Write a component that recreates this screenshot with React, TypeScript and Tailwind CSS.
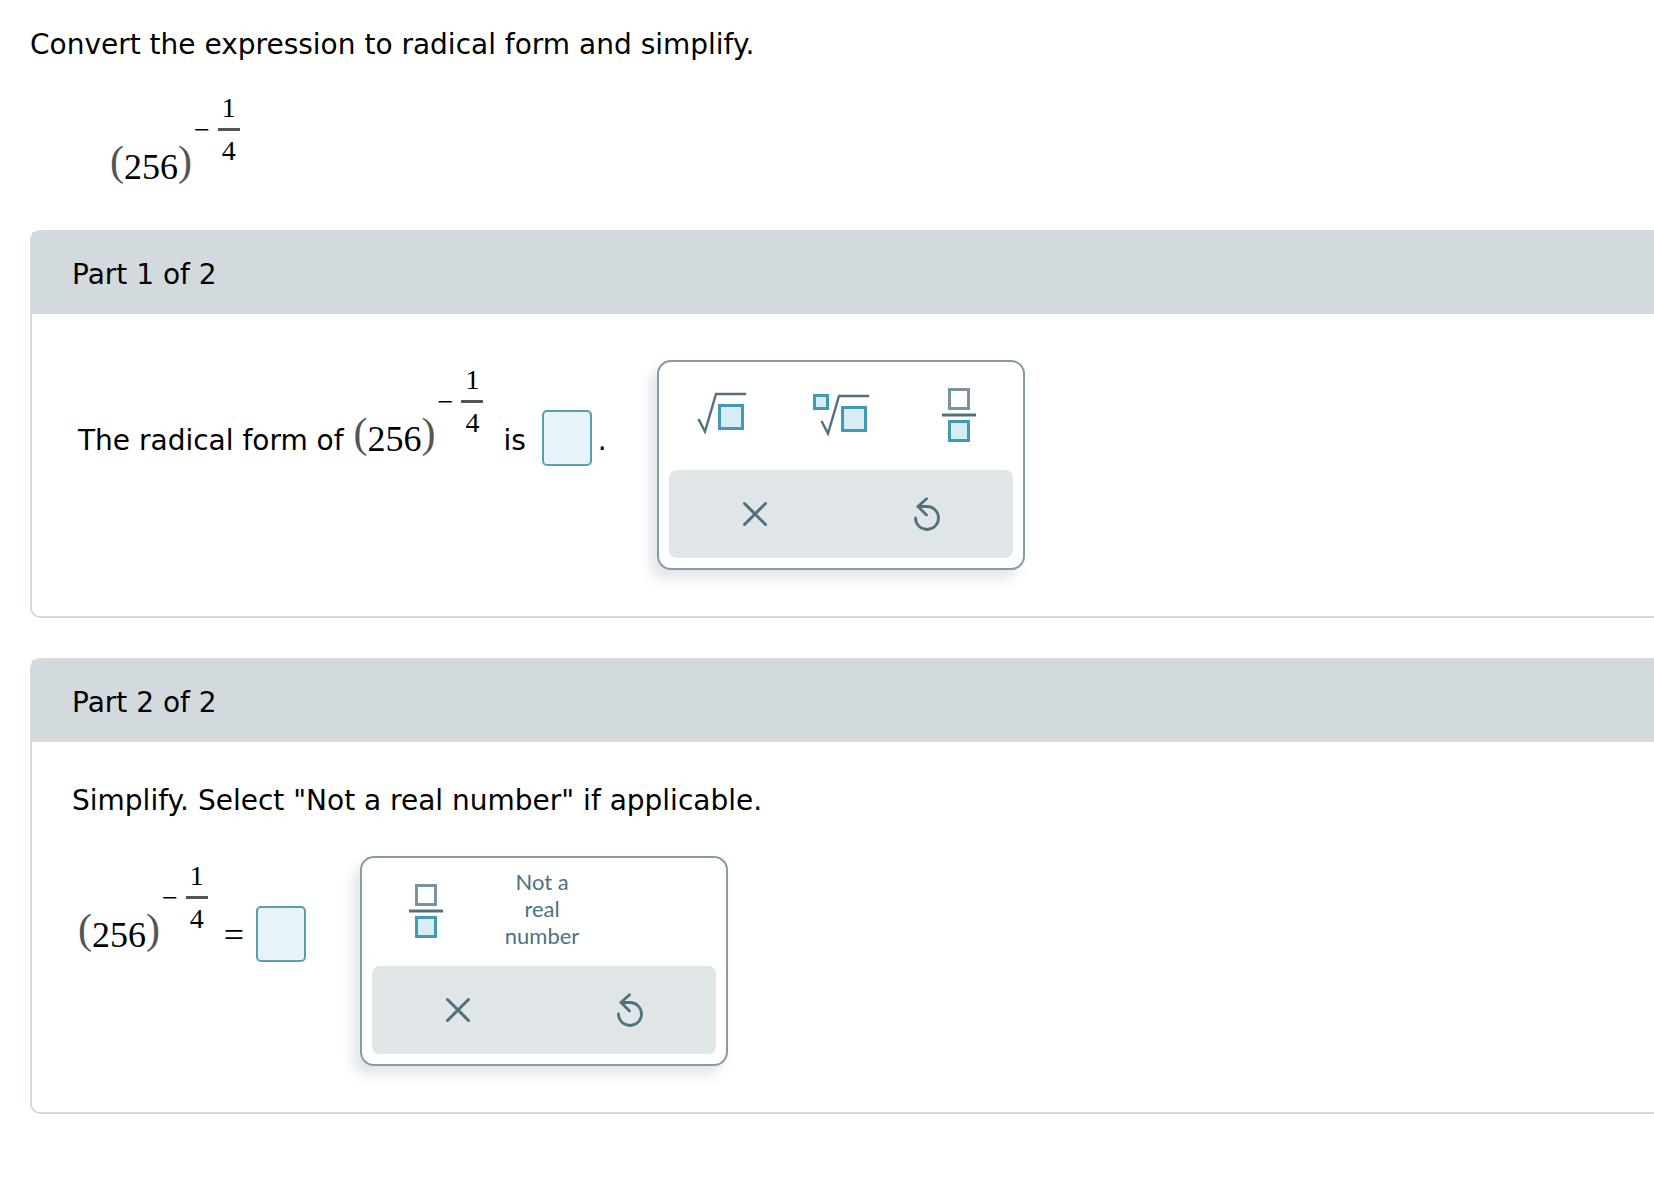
import type { ReactNode } from "react";

function Power() {
  return (
    <div
      role="math"
      aria-label="256 to the power of negative one fourth"
      className="flex items-start gap-0.5 font-['Liberation_Serif',serif] text-black"
    >
      <div className="mt-[55px] flex items-center text-[36px] leading-9">
        <span className="pb-3 text-[42px] leading-6 text-[#555]">(</span>
        <span>256</span>
        <span className="pb-3 text-[42px] leading-6 text-[#555]">)</span>
      </div>
      <div className="flex items-center gap-2 text-[28px] leading-7">
        <span>−</span>
        <div className="flex flex-col items-center gap-1.5">
          <span>1</span>
          <span className="h-[3px] w-[22px] bg-[#555]" />
          <span>4</span>
        </div>
      </div>
    </div>
  );
}

function AnswerBox({ label }: { label: string }) {
  return (
    <input
      type="text"
      aria-label={label}
      className="mt-11 h-14 w-[50px] rounded-[5px] border-2 border-[#5b9fad] bg-[#e6f3f8] text-center font-['Liberation_Serif',serif] text-[36px] outline-none"
    />
  );
}

function SqrtIcon() {
  return (
    <svg width="64" height="54" viewBox="0 0 64 54" fill="none">
      <path d="M5 32 11 43.500 22 6H51" stroke="#4f717f" strokeWidth="2.400" strokeLinecap="square" />
      <rect x="25.500" y="17.500" width="23" height="23" fill="#d5edf3" stroke="#4299b3" strokeWidth="3" />
    </svg>
  );
}

function RootIcon() {
  return (
    <svg width="64" height="54" viewBox="0 0 64 54" fill="none">
      <rect x="5.500" y="7.500" width="13" height="13" fill="#d5edf3" stroke="#4299b3" strokeWidth="3" />
      <path d="M13 34 19 45.500 30 8H59" stroke="#4f717f" strokeWidth="2.400" strokeLinecap="square" />
      <rect x="33.500" y="19.500" width="23" height="23" fill="#d5edf3" stroke="#4299b3" strokeWidth="3" />
    </svg>
  );
}

function FractionIcon() {
  return (
    <svg width="34" height="54" viewBox="0 0 34 54" fill="none">
      <rect x="7.500" y="1.500" width="19" height="19" stroke="#7a949f" strokeWidth="3" />
      <path d="M0 27H34" stroke="#4f717f" strokeWidth="3" />
      <rect x="7.500" y="33.500" width="19" height="19" fill="#d5edf3" stroke="#4299b3" strokeWidth="3" />
    </svg>
  );
}

function Palette({ children }: { children: ReactNode }) {
  return (
    <div className="w-[368px] shrink-0 rounded-[14px] border-2 border-[#849ca6] bg-white p-2.5 shadow-[-7px_9px_12px_rgba(79,113,127,0.17)]">
      <div className="grid h-[98px] grid-cols-3 text-[#4f717f]">{children}</div>
      <div className="grid h-[88px] grid-cols-2 rounded-lg bg-[#e0e5e8] text-[#4f717f]">
        <button type="button" aria-label="Clear" className="flex items-center justify-center">
          <svg width="26" height="26" viewBox="0 0 26 26" fill="none" stroke="currentColor" strokeWidth="3" strokeLinecap="round">
            <path d="M2.500 2.500 23.500 23.500M23.500 2.500 2.500 23.500" />
          </svg>
        </button>
        <button type="button" aria-label="Reset" className="flex items-center justify-center">
          <svg width="28" height="34" viewBox="0 0 28 34" fill="none" stroke="currentColor" strokeWidth="2.800" strokeLinecap="round" strokeLinejoin="round">
            <path d="M13.500 1.800 5 9.500 13.500 18" />
            <path d="M5 9.500H14A11.500 11.500 0 1 1 2.500 21" />
          </svg>
        </button>
      </div>
    </div>
  );
}

function Part({ title, children }: { title: string; children: ReactNode }) {
  return (
    <section className="mb-10 rounded-l-[10px] border-2 border-r-0 border-[#d3dade]">
      <h2 className="bg-[#d3dade] pt-[23px] pb-[19px] pl-10 leading-10">{title}</h2>
      {children}
    </section>
  );
}

export default function App() {
  return (
    <main className="min-h-screen bg-white pt-[25px] pl-[30px] font-['DejaVu_Sans',sans-serif] text-[28px] leading-10 text-black">
      <h1>Convert the expression to radical form and simplify.</h1>
      <div className="mt-[29px] mb-[45px] pl-20">
        <Power />
      </div>

      <Part title="Part 1 of 2">
        <div className="flex items-start pt-[46px] pb-[46px] pl-[46px]">
          <div className="flex items-start pt-1.5">
            <span className="mt-[55px]">The radical form of</span>
            <div className="ml-2.5">
              <Power />
            </div>
            <span className="mt-[55px] mr-4 ml-5">is</span>
            <AnswerBox label="Radical form" />
            <span className="mt-[55px] ml-1.5">.</span>
          </div>
          <div className="ml-[50px]">
            <Palette>
              <button type="button" aria-label="Square root" className="flex items-center justify-center pb-3">
                <SqrtIcon />
              </button>
              <button type="button" aria-label="Nth root" className="flex items-center justify-center pb-3">
                <RootIcon />
              </button>
              <button type="button" aria-label="Fraction" className="flex items-center justify-center pb-3 pl-2">
                <FractionIcon />
              </button>
            </Palette>
          </div>
        </div>
      </Part>

      <Part title="Part 2 of 2">
        <p className="pt-[39px] pl-10">Simplify. Select "Not a real number" if applicable.</p>
        <div className="flex items-start pt-[35px] pb-[46px] pl-[46px]">
          <div className="flex items-start pt-1.5">
            <Power />
            <span className="mt-[55px] mr-3 ml-4 font-['Liberation_Serif',serif] text-[36px] leading-9">=</span>
            <AnswerBox label="Simplified value" />
          </div>
          <div className="ml-[54px]">
            <Palette>
              <button type="button" aria-label="Fraction" className="flex items-center justify-center pr-1.5 pb-3">
                <FractionIcon />
              </button>
              <button type="button" className="flex items-start justify-center pr-1 font-['Lato',sans-serif] text-[22px] leading-[27px]">
                <span>
                  Not a<br />
                  real
                  <br />
                  number
                </span>
              </button>
            </Palette>
          </div>
        </div>
      </Part>
    </main>
  );
}
